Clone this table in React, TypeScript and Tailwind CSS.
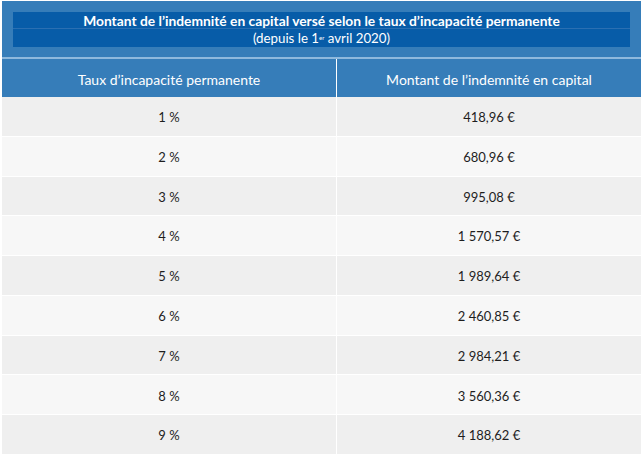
import React from 'react';

const rows = [
  ['1 %', '418,96 €'],
  ['2 %', '680,96 €'],
  ['3 %', '995,08 €'],
  ['4 %', '1 570,57 €'],
  ['5 %', '1 989,64 €'],
  ['6 %', '2 460,85 €'],
  ['7 %', '2 984,21 €'],
  ['8 %', '3 560,36 €'],
  ['9 %', '4 188,62 €'],
];

export default function App() {
  return (
    <div className="w-[643px] h-[461px] bg-white pl-[2px] pt-[1px] font-['Lato',sans-serif]">
      <div className="w-[639px]">
        {/* title block */}
        <div className="bg-[#367db9] px-[11px] pt-[11px] pb-[10px]">
          <div className="bg-[#075ca8] text-white text-center">
            <div className="h-[17px] leading-[18px] text-[13.8px] font-bold border-b border-[#2a6fb2]">
              Montant de l’indemnité en capital versé selon le taux d’incapacité permanente
            </div>
            <div className="h-[18px] leading-[19px] text-[13.3px]">
              (depuis le 1<sup className="text-[6px]">er</sup> avril 2020)
            </div>
          </div>
        </div>

        {/* column headers */}
        <div className="grid grid-cols-[334px_305px] h-[40px] border-t-2 border-[#8fb9dd] bg-[#367db9] text-white text-[14px]">
          <div className="flex items-center justify-center pt-[3px]">Taux d’incapacité permanente</div>
          <div className="flex items-center justify-center pt-[3px] border-l border-white">
            Montant de l’indemnité en capital
          </div>
        </div>

        {/* body */}
        <div className="flex flex-col h-[357px] text-[13px] text-[#1e1e1e]">
          {rows.map(([rate, amount], i) => (
            <div
              key={rate}
              className={
                'flex-1 grid grid-cols-[334px_305px] ' +
                (i > 0 ? 'border-t border-white ' : '') +
                (i % 2 === 0 ? 'bg-[#efefef]' : 'bg-[#f7f7f7]')
              }
            >
              <div className="flex items-center justify-center pt-[3px]">{rate}</div>
              <div className="flex items-center justify-center pt-[3px] border-l border-white">{amount}</div>
            </div>
          ))}
        </div>
      </div>
    </div>
  );
}
